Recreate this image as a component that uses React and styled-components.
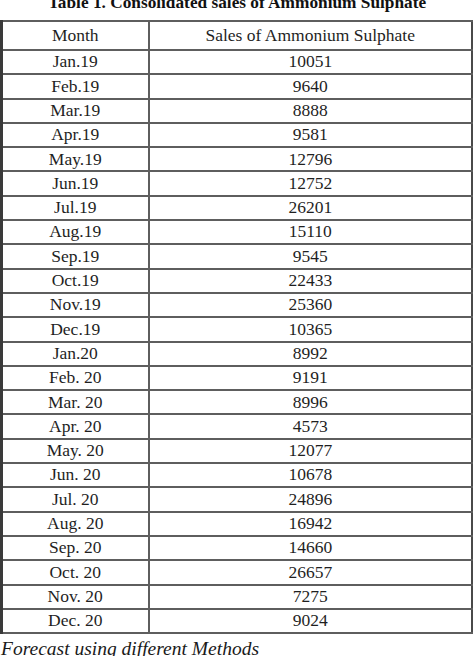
import React from 'react'
import styled, { createGlobalStyle } from 'styled-components'

const GlobalStyle = createGlobalStyle`
  html, body {
    margin: 0;
    padding: 0;
    background: #ffffff;
  }
  body {
    font-family: "Liberation Serif", "Times New Roman", serif;
    color: #1e1e1e;
    overflow: hidden;
  }
`

const Page = styled.div`
  width: 474px;
  height: 656px;
  overflow: hidden;
  box-sizing: border-box;
`

const Title = styled.div`
  height: 20px;
  line-height: 20px;
  margin-top: -7px;
  margin-bottom: 7px;
  text-align: center;
  font-weight: 700;
  font-size: 17.3px;
  color: #111;
`

const Table = styled.table`
  width: 473px;
  border-collapse: collapse;
  table-layout: fixed;
  border-left: 3px solid #3a3a3a;
  border-right: 2px solid #4a4a4a;
`

const Cell = styled.td`
  border: 2px solid #5e5e5e;
  padding: 0;
  text-align: center;
  font-size: 17.5px;
  height: ${(p) => (p.$head ? '27px' : '22.3px')};
  line-height: 1;
  color: #1f1f1f;
  &:first-child {
    border-left: none;
  }
  &:last-child {
    border-right: none;
  }
`

const Caption = styled.div`
  margin-top: 4px;
  padding-left: 1px;
  font-style: italic;
  font-size: 19.5px;
  line-height: 21px;
  color: #1a1a1a;
`

const rows = [
  ['Jan.19', '10051'],
  ['Feb.19', '9640'],
  ['Mar.19', '8888'],
  ['Apr.19', '9581'],
  ['May.19', '12796'],
  ['Jun.19', '12752'],
  ['Jul.19', '26201'],
  ['Aug.19', '15110'],
  ['Sep.19', '9545'],
  ['Oct.19', '22433'],
  ['Nov.19', '25360'],
  ['Dec.19', '10365'],
  ['Jan.20', '8992'],
  ['Feb. 20', '9191'],
  ['Mar. 20', '8996'],
  ['Apr. 20', '4573'],
  ['May. 20', '12077'],
  ['Jun. 20', '10678'],
  ['Jul. 20', '24896'],
  ['Aug. 20', '16942'],
  ['Sep. 20', '14660'],
  ['Oct. 20', '26657'],
  ['Nov. 20', '7275'],
  ['Dec. 20', '9024'],
]

export default function App() {
  return (
    <Page>
      <GlobalStyle />
      <Title>Table 1. Consolidated sales of Ammonium Sulphate</Title>
      <Table>
        <colgroup>
          <col style={{ width: '147px' }} />
          <col />
        </colgroup>
        <tbody>
          <tr>
            <Cell $head>Month</Cell>
            <Cell $head>Sales of Ammonium Sulphate</Cell>
          </tr>
          {rows.map(([m, v]) => (
            <tr key={m}>
              <Cell>{m}</Cell>
              <Cell>{v}</Cell>
            </tr>
          ))}
        </tbody>
      </Table>
      <Caption>Forecast using different Methods</Caption>
    </Page>
  )
}
